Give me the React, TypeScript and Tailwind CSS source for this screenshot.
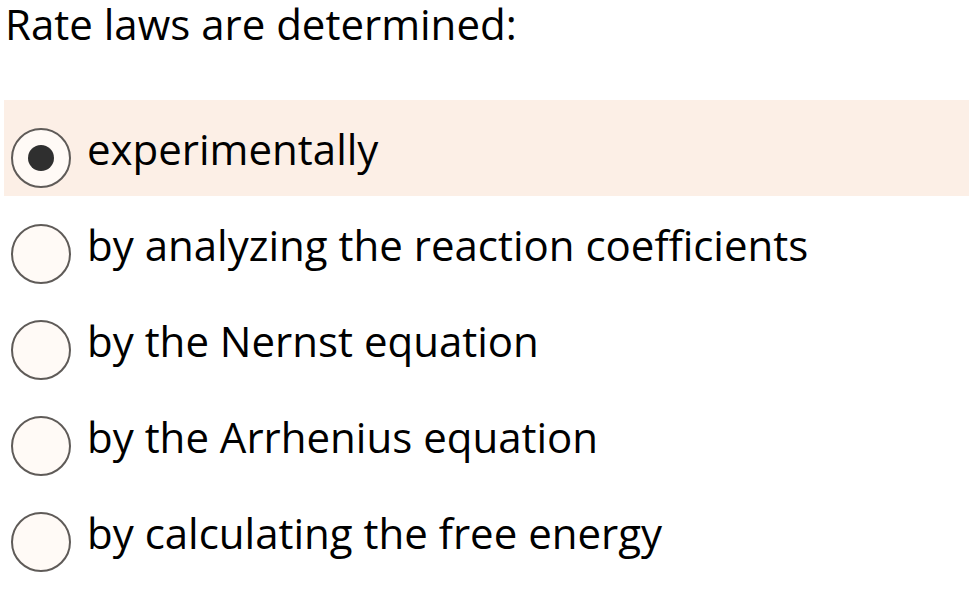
import React from "react";

const options = [
  "experimentally",
  "by analyzing the reaction coefficients",
  "by the Nernst equation",
  "by the Arrhenius equation",
  "by calculating the free energy",
];

function Radio({ checked }: { checked: boolean }) {
  return (
    <div className="w-[60px] h-[60px] shrink-0 rounded-full border-2 border-[#5f5b58] bg-[#fffaf6] flex items-center justify-center">
      {checked && <div className="w-[26px] h-[26px] rounded-full bg-[#2f2f2f]" />}
    </div>
  );
}

export default function App() {
  return (
    <div
      className="w-[969px] h-[605px] bg-white overflow-hidden text-black"
      style={{ fontFamily: '"Open Sans", sans-serif' }}
    >
      <div className="h-[100px] pl-[5px] pt-[3px] text-[42px] leading-none whitespace-nowrap">Rate laws are determined:</div>
      <div className="pl-[4px]">
        {options.map((o, i) => (
          <div
            key={o}
            className={`h-[96px] flex items-start ${i === 0 ? "bg-[#fcefe6]" : ""}`}
          >
            <div className="ml-[7px] mt-[28px]">
              <Radio checked={i === 0} />
            </div>
            <div className="ml-[16px] mt-[28px] text-[42px] leading-none whitespace-nowrap">{o}</div>
          </div>
        ))}
      </div>
    </div>
  );
}
